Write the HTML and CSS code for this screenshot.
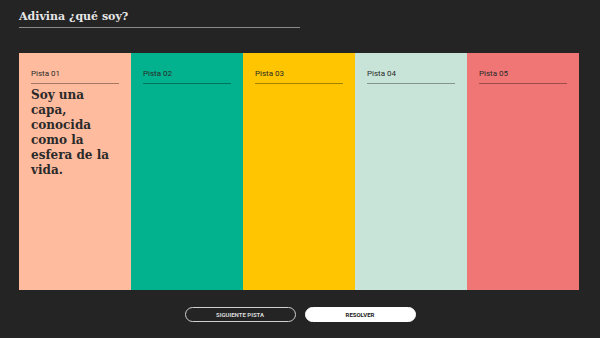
FILE: index.html
```html
<!DOCTYPE html>
<html lang="es">
<head>
  <meta charset="UTF-8">
  <title>Adivina ¿qué soy?</title>
  <link rel="stylesheet" href="styles.css">
</head>
<body>
  <header class="top">
    <h1>Adivina ¿qué soy?</h1>
  </header>

  <div class="board">
    <div class="clue c1">
      <h3>Pista 01</h3>
      <p>Soy una capa, conocida como la esfera de la vida.</p>
    </div>
    <div class="clue c2">
      <h3>Pista 02</h3>
    </div>
    <div class="clue c3">
      <h3>Pista 03</h3>
    </div>
    <div class="clue c4">
      <h3>Pista 04</h3>
    </div>
    <div class="clue c5">
      <h3>Pista 05</h3>
    </div>
  </div>

  <div class="actions">
    <button class="btn outline">SIGUIENTE PISTA</button>
    <button class="btn solid">RESOLVER</button>
  </div>
</body>
</html>
```

FILE: styles.css
```css
body {
  margin: 0;
  background: #242424;
  font-family: Roboto, "Noto Sans", sans-serif;
  width: 600px;
  height: 338px;
  overflow: hidden;
}
.top {
  padding: 10px 0 0 19px;
}
.top h1 {
  margin: 0;
  width: 281px;
  font-family: "DejaVu Serif", serif;
  font-size: 11px;
  font-weight: bold;
  line-height: 14px;
  color: #e6e6e6;
  padding-bottom: 3px;
  border-bottom: 1px solid #8a8a8a;
}
.board {
  display: flex;
  margin: 25px 21px 0 19px;
  height: 237px;
}
.clue {
  flex: 1;
  padding: 16px 12px 0 12px;
  color: #2a2a2a;
}
.clue h3 {
  margin: 0;
  font-size: 8px;
  font-weight: normal;
  line-height: 10px;
  padding-bottom: 4px;
  border-bottom: 1px solid rgba(0, 0, 0, 0.35);
}
.clue p {
  margin: 4px 0 0 0;
  max-width: 82px;
  font-family: "DejaVu Serif", serif;
  font-size: 12px;
  font-weight: bold;
  line-height: 15px;
}
.c1 { background: #ffbb9e; }
.c2 { background: #02b18e; }
.c3 { background: #ffc500; }
.c4 { background: #c8e3d8; }
.c5 { background: #f07575; }
.actions {
  display: flex;
  justify-content: center;
  gap: 9px;
  margin-top: 17px;
}
.btn {
  width: 111px;
  height: 15px;
  border-radius: 8px;
  font-family: Roboto, sans-serif;
  font-size: 6px;
  font-weight: bold;
  padding: 0;
}
.outline {
  background: transparent;
  border: 1px solid #cfcfcf;
  color: #d8d8d8;
}
.solid {
  background: #ffffff;
  border: 1px solid #ffffff;
  color: #222;
}
```
